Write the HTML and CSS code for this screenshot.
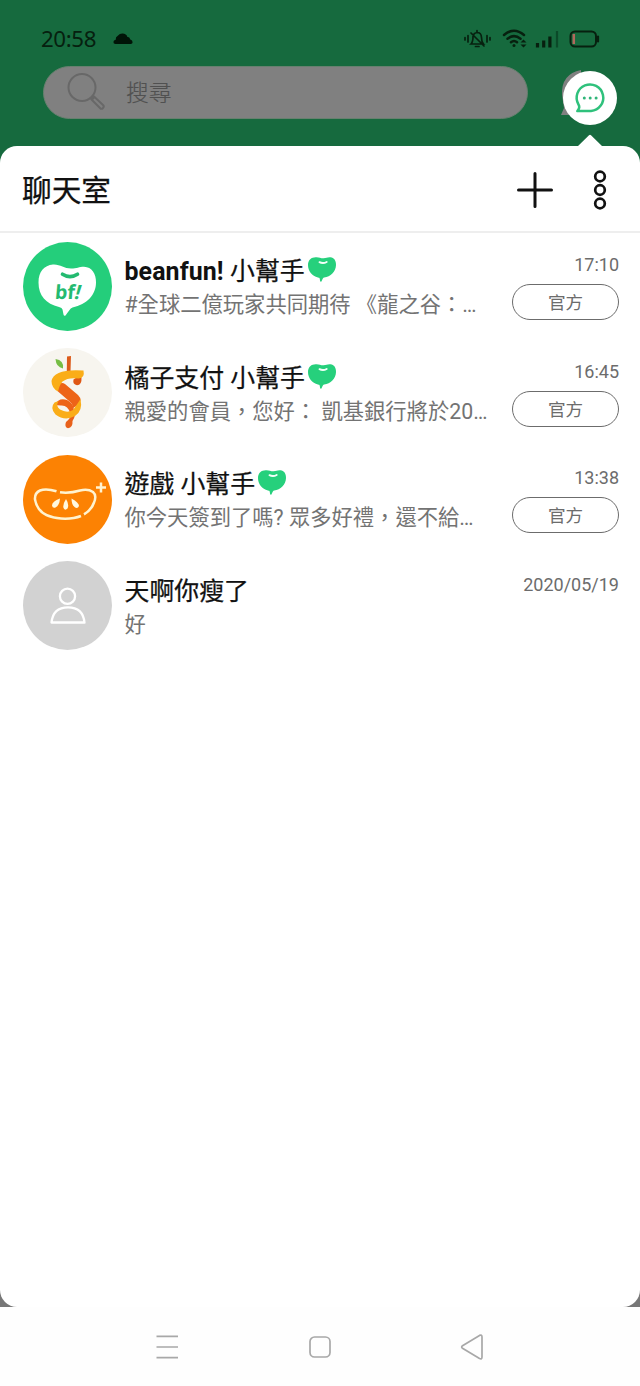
FILE: index.html
```html
<!DOCTYPE html>
<html lang="zh-Hant">
<head>
<meta charset="utf-8">
<title>聊天室</title>
<link rel="stylesheet" href="styles.css">
</head>
<body>
<svg class="defs" aria-hidden="true">
  <symbol id="bean" viewBox="0 0 30 28">
    <path fill="#26d07c" d="M1 9C1 3.500 5 .8 9.500 1.200C12.500 1.500 14 2.300 16.500 2.200C19.500 2.100 20.500 1 23.500 1.300C27 1.700 29.200 4.500 29 9C28.800 16 23.500 20.800 17.200 21.500C16 21.700 15.800 22.700 14.400 25.500C13.900 26 13.200 25.700 13.100 25L12.700 22.500C12.600 21.700 12 21.700 11 21.400C5 20 1 15 1 9Z"/>
    <path d="M12.500 6.200Q16 8 19.700 6" fill="none" stroke="#f4fff9" stroke-width="1.900" stroke-linecap="round"/>
  </symbol>
</svg>
<div class="phone">
  <header class="top">
    <div class="status">
      <span class="clock">20:58</span>
      <svg class="cloud" viewBox="0 0 20 12"><path d="M2.500 11Q.4 10.800 .4 8.900Q.5 7 2.700 6.700Q2.500 3.600 4.800 2.700Q6.700 .5 9.500 .6Q13.500 .8 14.200 3.800Q16.800 4 17.300 6.500Q19.600 7.400 19.600 9.200Q19.500 11 17.800 11Z" fill="#001407"/></svg>
      <svg class="indicators" viewBox="462 26 138 26" fill="none" stroke="#07200f" stroke-width="1.700" stroke-linecap="round">
        <path d="M465 37.500V40M468 35.500V42M490 37.500V40M487 35.500V42"/>
        <path d="M471 44H483.500Q481.500 42 481.500 37.500Q481.200 32.500 477.200 32.500Q473.600 32.800 473 36.500Q473 42 471 44ZM477 30.500V32M471 33L484 46M475.500 46.500H479"/>
        <path d="M504 35Q514 26.500 524 35M507.500 38.800Q514 33.500 520.500 38.800M511 42.200Q514 39.800 517 42.200" stroke-width="2.500"/>
        <circle cx="514" cy="45.500" r="1.500" fill="#07200f" stroke="none"/>
        <path d="M520.500 42.500L523.500 39.500L526.500 42.500ZM520.500 44.500L523.500 47.500L526.500 44.500Z" fill="#07200f" stroke="none"/>
        <path d="M537.500 43V47.500M543.700 40.500V47.500M549.900 36.500V47.500" stroke-width="3.200" stroke-linecap="butt"/>
        <path d="M557 31V47.500" stroke="#0b4a29" stroke-width="2.200" stroke-linecap="butt"/>
        <rect x="570.500" y="31.500" width="25.500" height="15" rx="4.500" stroke-width="2"/>
        <path d="M598 36.500V41.500" stroke-width="2.200"/>
        <path d="M573.800 34V44" stroke="#b0685c" stroke-width="2.500" stroke-linecap="butt"/>
      </svg>
    </div>
    <div class="tools">
      <div class="search">
        <svg class="lens" viewBox="66 71 40 40" fill="none" stroke="#686868" stroke-width="2"><circle cx="82" cy="87.500" r="13.500"/><path d="M91.500 96.500L94 99M94 96.500L103 105Q104.500 106.500 103 108Q101.500 109.700 100 108L91.500 99.500Q90.500 98.500 92 97Q93 95.500 94 96.500Z"/></svg>
        <span class="hint">搜尋</span>
      </div>
      <svg class="chat" viewBox="559 68 60 60">
        <path d="M581 70Q561 74 562 95L564 108L561 115H582Z" fill="#808080"/>
        <circle cx="590" cy="98" r="27" fill="#fff"/>
        <path d="M577.300 111H591A13.300 13.300 0 1 0 578.500 104.500Q580.500 107.500 577.300 111Z" fill="none" stroke="#2fc17c" stroke-width="2.500" stroke-linejoin="round"/>
        <g fill="#2fb578"><circle cx="584.300" cy="98" r="1.500"/><circle cx="590.200" cy="98" r="1.500"/><circle cx="596.100" cy="98" r="1.500"/></g>
      </svg>
    </div>
    <svg class="pointer" viewBox="0 0 26 13"><path d="M0 13L12 1.200Q13 .2 14 1.200L26 13Z" fill="#fff"/></svg>
  </header>
  <main class="backdrop">
    <section class="sheet">
      <div class="heading">
        <h1>聊天室</h1>
        <svg class="plus" viewBox="0 0 38 38"><path d="M19 2.500V35.500M2.500 19H35.500" stroke="#111" stroke-width="3" stroke-linecap="round"/></svg>
        <svg class="more" viewBox="0 0 16 42" fill="none" stroke="#111" stroke-width="2.700"><circle cx="8" cy="7.500" r="4.800"/><circle cx="8" cy="21" r="4.800"/><circle cx="8" cy="34.500" r="4.800"/></svg>
      </div>
      <ul class="rooms">
        <li class="room">
          <svg class="avatar" viewBox="23 241.500 89 89">
            <circle cx="67.500" cy="286" r="44.500" fill="#24ce7b"/>
            <path d="M53 264C60 263.500 64 268 71 268C77 268 79 266.200 84 266.200C92 266.500 96 273 96 282C96 294 87 304 72.500 307C70 308 68.500 311 65.500 315Q64 316 63.500 314L62.500 309Q62.200 307 59 306.500C46 303.500 38.500 295 38.500 282C38.500 271 44 265 53 264Z" fill="#fff"/>
            <path d="M62.500 273.700Q70 278.500 77.500 273.700" fill="none" stroke="#24ba70" stroke-width="3.600" stroke-linecap="round"/>
            <text class="logo-text" transform="translate(54.500 298.500) skewX(-5)">bf<tspan class="bang">!</tspan></text>
          </svg>
          <div class="body"><div class="name"><b>beanfun! </b>小幫手<svg class="bean"><use href="#bean"/></svg></div><p class="preview">#全球二億玩家共同期待 《龍之谷：…</p></div>
          <div class="side"><time>17:10</time><span class="badge">官方</span></div>
        </li>
        <li class="room">
          <svg class="avatar" viewBox="23 348 89 89">
            <circle cx="67.500" cy="392.500" r="44.500" fill="#f7f5ef"/>
            <path d="M55.500 359Q64 360 63 368.500Q56 367 55.500 359Z" fill="#76bd45"/>
            <path d="M67 356.500L71 356L70.500 371H66.800Z" fill="#dc5b1b"/>
            <path d="M73.500 379.500Q78 376 81.500 377.500Q82 385 77 385.200Q72.500 384.500 73.500 379.500Z" fill="#df5714"/>
            <path d="M57 388Q60 381 65 384L78 395Q83 400 78 405L73 408Q73 404 69 401L58 391.500Z" fill="#ed6418"/>
            <path d="M54.500 405Q59 397 67 400Q74 403 74 412L70 413Q68 405 61 405.500Z" fill="#ed6418"/>
            <path d="M71 414L75.500 413Q74.500 418 72.500 421Q73 427.500 68 428.300Q64 427 66 422Q71 418 71 414Z" fill="#e8611a"/>
            <path d="M83.500 370.500Q85 378 79 378.500Q68 377 62.500 381.500Q59.500 385 58 391.500Q51.500 388 51.500 381Q54 368.500 83.500 370.500Z" fill="#faad18"/>
            <path d="M80.500 399Q83 411 75 416Q65 421.500 55.500 414.500Q49.500 408 54.500 402.500L58.500 401Q55.500 406.500 60 409.500Q67 413.500 73 410Q76 406 80.500 399Z" fill="#faad18"/>
          </svg>
          <div class="body"><div class="name">橘子支付 小幫手<svg class="bean"><use href="#bean"/></svg></div><p class="preview">親愛的會員，您好： 凱基銀行將於20…</p></div>
          <div class="side"><time>16:45</time><span class="badge">官方</span></div>
        </li>
        <li class="room">
          <svg class="avatar" viewBox="23 454.500 89 89" fill="none" stroke="#fff3d0" stroke-width="2.500">
            <circle cx="67.500" cy="499" r="44.500" fill="#fc8203" stroke="none"/>
            <path d="M56.500 490.800Q46 487.500 40 490Q34.500 492.500 35 499Q38 516.500 61 518Q73 518.700 81 515.500"/>
            <path d="M60 491.800Q70 493 80 490Q88 488 93 491.500Q97 495 94 502Q91.500 509.500 84 513.800"/>
            <g fill="#fff8df" stroke="none"><path d="M60 498Q52 501 52 505Q52.500 508 55.500 507Q59.500 505 60 498Z"/><path d="M66 498.500Q62.500 504 63.500 507.500Q65 510.500 67.500 508Q69.500 504 66 498.500Z"/><path d="M71.500 498Q79 502 79 505.500Q77.500 509 74.500 506.500Q71.500 504 71.500 498Z"/></g>
            <path d="M101 482V492M96 487H106"/>
          </svg>
          <div class="body"><div class="name">遊戲 小幫手<svg class="bean"><use href="#bean"/></svg></div><p class="preview">你今天簽到了嗎? 眾多好禮，還不給…</p></div>
          <div class="side"><time>13:38</time><span class="badge">官方</span></div>
        </li>
        <li class="room">
          <svg class="avatar" viewBox="23 561.200 89 89" fill="none" stroke="#fff" stroke-width="2.300" stroke-linejoin="round">
            <circle cx="67.500" cy="605.700" r="44.500" fill="#d2d2d2" stroke="none"/>
            <circle cx="67.500" cy="596.500" r="7.600"/><path d="M51.500 622.700Q53 607.500 68 607.500Q83 607.500 84.500 622.700Z"/>
          </svg>
          <div class="body"><div class="name">天啊你瘦了</div><p class="preview">好</p></div>
          <div class="side"><time>2020/05/19</time></div>
        </li>
      </ul>
    </section>
  </main>
  <nav class="nav">
    <svg viewBox="0 0 28 30"><path d="M3.500 4.300H25M3.500 15H25M3.500 25.700H25"/></svg>
    <svg viewBox="0 0 28 30"><rect x="4" y="5" width="20" height="20" rx="4.500"/></svg>
    <svg viewBox="0 0 28 30"><path d="M4.500 13.700L21.500 3.400Q24 2.300 24 5V25Q24 27.700 21.500 26.500L4.500 16.200Q2.800 15 4.500 13.700Z"/></svg>
  </nav>
</div>
</body>
</html>
```
FILE: styles.css
```css
* { box-sizing: border-box; }
body {
  margin: 0;
  font-family: Roboto, "Noto Sans CJK TC", sans-serif;
  color: #111;
}
h1, p, ul { margin: 0; padding: 0; }
svg { display: block; flex: none; }
.defs { position: absolute; width: 0; height: 0; }
.phone {
  width: 640px;
  height: 1386px;
  display: flex;
  flex-direction: column;
  background: #fff;
  overflow: hidden;
}
.top {
  position: relative;
  height: 146px;
  background: #166a3e;
}
.status {
  display: flex;
  align-items: center;
  height: 66px;
  padding: 12px 40px 0 41px;
}
.clock { width: 72px; margin-top: -1px; font-family: "Noto Sans", sans-serif; font-size: 22.300px; letter-spacing: -.4px; color: #06200f; }
.cloud { width: 20px; height: 12px; }
.indicators { width: 138px; height: 26px; margin-left: auto; }
.tools {
  display: flex;
  align-items: flex-start;
  padding: 0 21px 0 43px;
}
.search {
  display: flex;
  align-items: center;
  gap: 20px;
  width: 485px;
  height: 53px;
  padding: 0 22px;
  border: 1px solid #67806f;
  border-radius: 27px;
  background: #808080;
  color: #505050;
  font-size: 22.800px;
  font-weight: 300;
}
.hint { margin-top: -3px; -webkit-text-stroke: .2px #505050; }
.lens { width: 40px; height: 40px; margin-top: -3px; }
.chat { width: 60px; height: 60px; margin: 2px 0 0 31px; }
.pointer { position: absolute; left: 577px; bottom: -1px; width: 26px; height: 13px; z-index: 2; }
.backdrop {
  height: 1161px;
  background: linear-gradient(#166a3e 50%, #777 50%);
}
.sheet {
  height: 100%;
  background: #fff;
  border-radius: 17px;
}
.heading {
  display: flex;
  align-items: center;
  height: 87px;
  padding: 0 32px 0 22px;
  border-bottom: 2px solid #eee;
}
h1 { flex: 1; font-size: 29.700px; font-weight: 400; line-height: 44px; margin-top: 5px; -webkit-text-stroke: .25px #111; }
.plus { width: 38px; height: 38px; margin: 2px 38px 0 0; }
.more { width: 16px; height: 42px; margin-top: 2px; }
.rooms { list-style: none; }
.room {
  display: flex;
  height: 106.600px;
  padding: 0 21px 0 23px;
}
.avatar { width: 89px; height: 89px; margin: 8.500px 12.500px 0 0; }
.logo-text { font: 700 19.500px "Open Sans", sans-serif; fill: #24ba70; }
.bang { font-style: italic; }
.body { flex: 1; padding-top: 22px; white-space: nowrap; }
.name { display: flex; height: 33px; line-height: 33px; font-size: 24.900px; -webkit-text-stroke: .25px #111; white-space: pre; }
.name b { font-weight: 700; letter-spacing: .12px; -webkit-text-stroke: 0; }
.bean { width: 30px; height: 28px; margin: 1px 0 0 2px; -webkit-text-stroke: 0; }
.preview { line-height: 34px; font-size: 21.300px; color: #737373; }
.side {
  display: flex;
  flex-direction: column;
  align-items: flex-end;
  padding-top: 21px;
  color: #6c6c6c;
}
time { height: 30px; line-height: 22px; font-size: 18px; }
.badge {
  width: 107px;
  height: 36px;
  border: 1.500px solid #6c6c6c;
  border-radius: 18px;
  line-height: 36px;
  text-align: center;
  font-size: 17.600px;
}
.nav {
  display: flex;
  justify-content: space-between;
  align-items: center;
  flex: 1;
  padding: 0 154px 0 153px;
  background: #fefefe;
}
.nav svg { width: 28px; height: 30px; fill: none; stroke: #a8a8a8; stroke-width: 1.700; }
```
